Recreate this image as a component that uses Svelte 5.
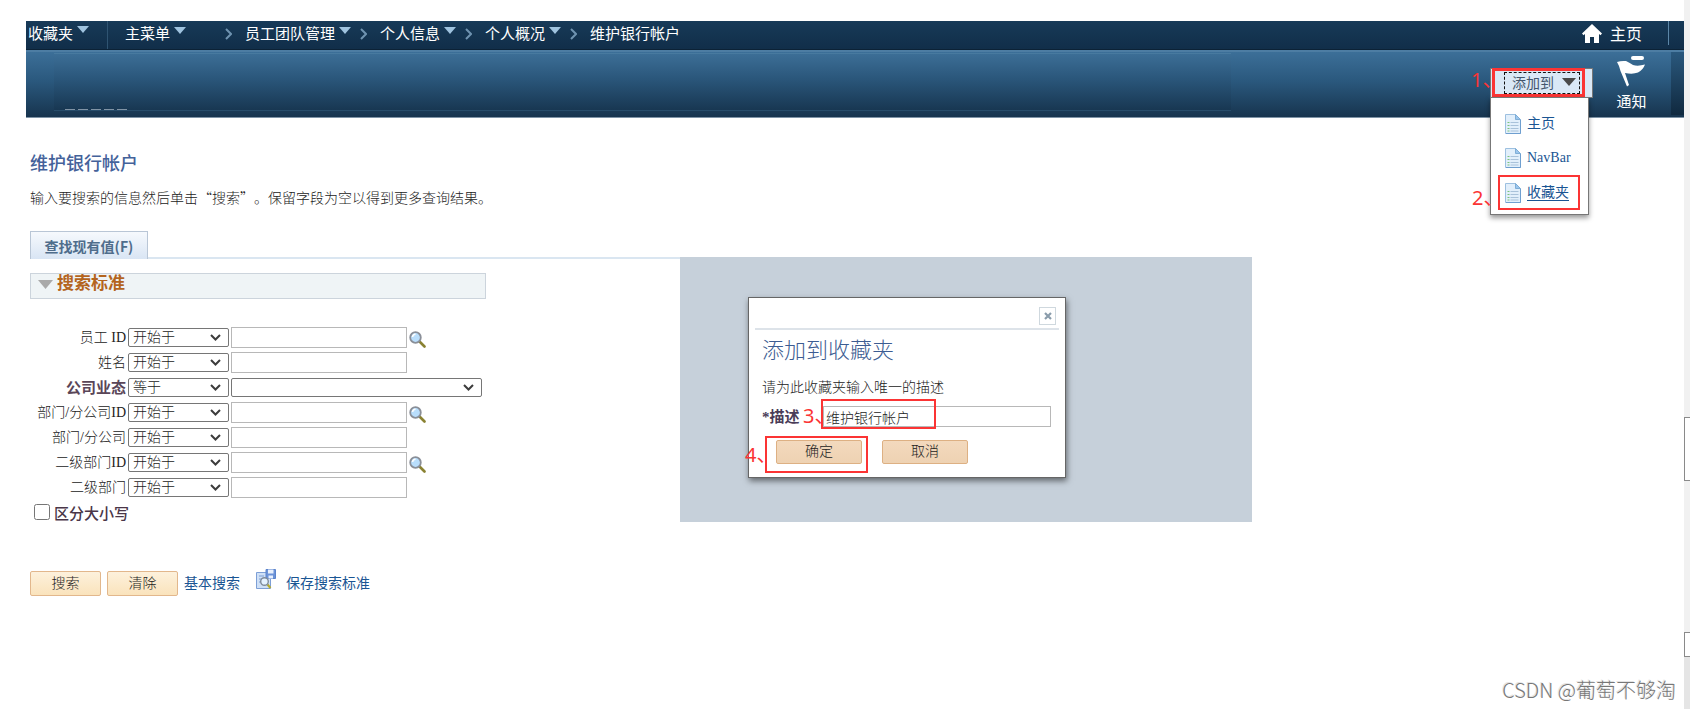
<script>
  const crumbs = [
    { label: '员工团队管理', menu: true },
    { label: '个人信息', menu: true },
    { label: '个人概况', menu: true },
    { label: '维护银行帐户', menu: false }
  ];
  const fields = [
    { id: 'emplid', label: '员工 ID', op: '开始于', lookup: true },
    { id: 'name', label: '姓名', op: '开始于' },
    { id: 'business', label: '公司业态', op: '等于', list: true, strong: true },
    { id: 'deptid', label: '部门/分公司ID', op: '开始于', lookup: true },
    { id: 'dept', label: '部门/分公司', op: '开始于' },
    { id: 'subdeptid', label: '二级部门ID', op: '开始于', lookup: true },
    { id: 'subdept', label: '二级部门', op: '开始于' }
  ];
  const targets = ['主页', 'NavBar', '收藏夹'];
  let description = $state('维护银行帐户');
</script>

{#snippet caret()}
  <svg class="caret" width="12" height="7" viewBox="0 0 12 7"><path d="M0 0h12L6 7z" fill="#9fc3df" /></svg>
{/snippet}

{#snippet arrow()}
  <svg class="arrow" width="11" height="7" viewBox="0 0 11 7"><path d="M1 1l4.500 4.500L10 1" fill="none" stroke="#3c3c3c" stroke-width="2" /></svg>
{/snippet}

<div class="page">
  <div class="main">
    <header>
      <nav>
        <a class="fav" href="#fav">收藏夹{@render caret()}</a>
        <a class="mainmenu" href="#menu">主菜单{@render caret()}</a>
        {#each crumbs as c}
          <svg class="chev" width="7" height="12" viewBox="0 0 7 12"><path d="M1 1l5 5-5 5" fill="none" stroke="#6f93b0" stroke-width="2" /></svg>
          <a class="crumb" href="#crumb">{c.label}{#if c.menu}{@render caret()}{/if}</a>
        {/each}
        <a class="home" href="#home">
          <svg width="20" height="19" viewBox="0 0 20 19"><path d="M10 0L0 9.500l1.500 1.800L3 10V19h5v-6h4v6h5v-9l1.500 1.300L20 9.500z" fill="#fff" /></svg>
          主页
        </a>
      </nav>
      <div class="banner">
        <div class="band"><i></i></div>
        <div class="addto">
          <button class="addbtn" type="button">
            <span>添加到 <svg width="14" height="8" viewBox="0 0 14 8"><path d="M0 0h14L7 8z" fill="#4a4a4a" /></svg></span>
          </button>
          <div class="menu">
            {#each targets as t, i}
              <a href="#target" class:chosen={i === 2}>
                <svg width="16" height="20" viewBox="0 0 16 20">
                  <path d="M.5.5h10l5 5v14H.5z" fill="#e2effb" stroke="#9dc0e0" />
                  <path d="M15.500 6v13.500H1" fill="none" stroke="#6f9fd0" />
                  <path d="M10.500.500v5h5z" fill="#9cc6ee" stroke="#7faed6" />
                  <path d="M5.500 8.500h8M5.500 11.500h8M5.500 14.500h8M5.500 17h8" stroke="#a9c2da" />
                  <path d="M2.500 8.500h2M2.500 11.500h2M2.500 14.500h2M2.500 17h2" stroke="#7cc47c" />
                </svg>
                <span>{t}</span>
              </a>
            {/each}
            <b class="mark two">2、</b>
          </div>
          <b class="mark one">1、</b>
        </div>
        <a class="notice" href="#notice">
          <svg width="29" height="31" viewBox="0 0 29 31">
            <rect x="14" y="0" width="13" height="4" rx="2" fill="#fff" />
            <path d="M0 6Q4 4.500 9 5Q13 7 16 9Q21 10.500 28 8.500Q26 14 21 16.500Q16 18.500 8 17L12 29L10 30.500L3.500 15Q2.500 10 0 6z" fill="#fff" />
          </svg>
          通知
        </a>
        <div class="edge"></div>
      </div>
    </header>

    <div class="content">
      <h1>维护银行帐户</h1>
      <p class="intro">输入要搜索的信息然后单击“搜索”。保留字段为空以得到更多查询结果。</p>
      <div class="columns">
        <form>
          <div class="tabs"><button type="button">查找现有值(F)</button></div>
          <h2><svg width="15" height="9" viewBox="0 0 15 9"><path d="M0 0h15L7.500 9z" fill="#a9a9a9" /></svg>搜索标准</h2>
          <div class="fields">
            {#each fields as f}
              <label class:strong={f.strong} for={f.id}>{f.label}</label>
              <div class="select op">
                <select aria-label={f.label}><option>{f.op}</option></select>
                {@render arrow()}
              </div>
              {#if f.list}
                <div class="select list">
                  <select id={f.id}><option></option></select>
                  {@render arrow()}
                </div>
              {:else}
                <div class="value">
                  <input id={f.id} type="text" />
                  {#if f.lookup}
                    <button type="button" aria-label="查找">
                      <svg width="17" height="17" viewBox="0 0 17 17">
                        <path d="M10.500 10.500l5 5" stroke="#8a8232" stroke-width="2.600" stroke-linecap="round" />
                        <circle cx="6.500" cy="6.500" r="5.300" fill="#b9defc" stroke="#8a8f98" stroke-width="1.800" />
                        <path d="M3.500 6a3.200 3.200 0 0 1 3-2.800" stroke="#fff" stroke-width="1.600" fill="none" />
                      </svg>
                    </button>
                  {/if}
                </div>
              {/if}
            {/each}
          </div>
          <label class="case"><input type="checkbox" />区分大小写</label>
          <div class="actions">
            <button type="button">搜索</button>
            <button type="button">清除</button>
            <a href="#basic">基本搜索</a>
            <svg width="20" height="21" viewBox="0 0 20 21">
              <path d="M.5 3.500h14v16H.5z" fill="#cfe0f6" stroke="#7d9fd6" />
              <path d="M3 7h5M3 10h3M3 13h2" stroke="#7d9fd6" />
              <path d="M10 .5h9.500v9H10z" fill="#6c93d8" stroke="#5c84cc" />
              <path d="M12 .5h5.500v4H12zM12.500 6.500h4.500v3h-4.500z" fill="#e8f0fc" />
              <path d="M11.500 15.500l3 3.500" stroke="#b4ab2e" stroke-width="2.200" />
              <circle cx="8.500" cy="12.500" r="3.800" fill="#e4f2ff" stroke="#7f8b9b" stroke-width="1.400" />
            </svg>
            <a href="#save">保存搜索标准</a>
          </div>
        </form>

        <div class="shade">
          <div class="dialog" role="dialog" aria-labelledby="dlg-title">
            <div class="bar">
              <button type="button" aria-label="关闭">
                <svg width="8" height="8" viewBox="0 0 8 8"><path d="M1 1l6 6M7 1L1 7" stroke="#8a9cab" stroke-width="2.200" /></svg>
              </button>
            </div>
            <h3 id="dlg-title">添加到收藏夹</h3>
            <p>请为此收藏夹输入唯一的描述</p>
            <div class="desc">
              <label for="desc">*描述</label>
              <div class="descbox">
                <input id="desc" type="text" bind:value={description} />
                <i class="frame"></i>
                <b class="mark three">3、</b>
              </div>
            </div>
            <div class="buttons">
              <div class="ok">
                <button type="button">确定</button>
                <i class="frame"></i>
                <b class="mark four">4、</b>
              </div>
              <button type="button">取消</button>
            </div>
          </div>
        </div>
      </div>
    </div>
  </div>

  <aside>
    <div class="track"></div>
    <div class="box tall"></div>
    <div class="track mid"></div>
    <div class="box"></div>
    <div class="foot"></div>
  </aside>
  <div class="watermark">CSDN @葡萄不够淘</div>
</div>

<style>
  :global(body) { margin: 0; background: #fff; }
  .page, button, input, select {
    font-family: 'Liberation Serif', 'Noto Sans CJK SC', sans-serif;
    font-size: 14px;
    font-weight: 300;
    color: #222;
  }
  .page, .page * { box-sizing: border-box; }
  .page { position: relative; display: flex; min-height: 100vh; line-height: 20px; overflow: hidden; }
  .main { flex: 1; padding-top: 21px; }
  svg { display: block; flex: none; }
  a { text-decoration: none; color: #1a5593; font-weight: 400; }
  h1, h2, h3, p { margin: 0; }
  button { padding: 0; }

  header { margin-left: 26px; font-family: 'Noto Sans CJK SC', sans-serif; }
  nav {
    display: flex; align-items: flex-start; height: 29px; font-size: 15px;
    background: linear-gradient(#173a58, #112e49); border-bottom: 1px solid #0c2236;
  }
  nav a { display: flex; align-items: center; color: #fff; height: 24px; white-space: nowrap; }
  .caret { margin: 0 0 6px 4px; }
  .fav { width: 82px; height: 28px; padding: 0 0 5px 2px; border-right: 1px solid #2f5472; }
  .mainmenu { margin: 0 39px 0 17px; }
  .chev { margin: 7px 13px 0 0; }
  .crumb { margin-right: 9px; }
  .home {
    margin-left: auto; margin-right: 15px; padding-right: 26px; gap: 8px;
    font-size: 16px; border-right: 1px solid #5c87a8;
  }
  .banner {
    display: flex; height: 68px; border-top: 2px solid #4d7da3; border-bottom: 1px solid #7e93a6;
    background: linear-gradient(#3c6f98, #2a587d 45%, #17344e); position: relative;
  }
  .band {
    width: 71%; margin: 1px auto 6px 28px; border-top: 1px solid #487a9f; border-bottom: 1px solid #274c6a;
    background: linear-gradient(#3c6e96, #2a567a 45%, #183752);
    display: flex; align-items: flex-end;
  }
  .band i {
    width: 62px; height: 1px; margin-left: 11px;
    background: repeating-linear-gradient(90deg, #8093a5 0 10px, transparent 10px 13px);
  }
  .addto { position: relative; width: 103px; height: 30px; margin: 16px 23px 0 0; }
  .addbtn {
    display: flex; width: 103px; height: 30px; padding: 0; background: #dae8f6;
    border: 1px solid #777; border-radius: 0; align-items: center;
    font-family: 'Noto Sans CJK SC', sans-serif; font-weight: 400; color: #44566c;
  }
  .addbtn span {
    display: flex; align-items: center; justify-content: space-between; height: 20px;
    margin-left: 14px; padding: 0 3px 2px 7px; width: 74px; outline: 1px dashed #111; position: relative;
    line-height: 18px;
  }
  .addbtn span::after {
    content: ''; position: absolute; inset: -5px -6px -4px -13px; border: 3px solid #fb3434;
  }
  .menu {
    position: absolute; z-index: 2; top: 29px; left: 0; width: 99px; padding: 9px 8px 4px 7px; background: #fff;
    border: 1px solid #777; box-shadow: 0 3px 5px rgba(0, 0, 0, .4);
    font-family: 'Liberation Serif', 'Noto Sans CJK SC', sans-serif;
  }
  .menu a { display: flex; align-items: center; gap: 6px; height: 34px; padding: 0 5px; border: 2px solid transparent; }
  .menu a.chosen { height: 35px; border-color: #fb3434; }
  .chosen span { text-decoration: underline; text-underline-offset: 3px; }
  .mark {
    position: absolute; z-index: 3; font: 20px/24px 'Noto Sans', 'Noto Sans CJK SC', sans-serif;
    color: #fb3434; white-space: nowrap;
  }
  .one { left: -19px; top: 0; }
  .two { left: -19px; bottom: 4px; }
  .notice { display: flex; flex-direction: column; align-items: center; gap: 4px; padding-top: 4px; width: 31px; margin-right: 24px; font-size: 15px; color: #fff; white-space: nowrap; }
  .edge { width: 13px; margin-bottom: 2px; background: linear-gradient(#2a587d, #10293f); }

  .content { padding: 33px 0 0 30px; }
  h1 { font-size: 18px; line-height: 26px; font-weight: 500; color: #44629a; }
  .intro {
    margin: 10px 0 24px; font-family: 'Noto Sans CJK SC', sans-serif; line-height: 20px;
    white-space: nowrap; text-spacing-trim: space-all;
  }
  .columns { display: grid; grid-template-columns: 650fr 572fr 432fr; align-items: start; }
  .tabs { height: 28px; border-bottom: 2px solid #dae6f1; }
  .tabs button {
    height: 28px; width: 118px; font: 700 14px 'Noto Sans CJK SC', sans-serif; color: #4f6d8c;
    border: 1px solid #b9c6d6; border-bottom: 0; background: linear-gradient(#f6f9fd, #d9e5f4);
  }
  h2 {
    display: flex; align-items: center; gap: 4px; width: 456px; height: 26px; margin-top: 14px; padding: 0 0 4px 7px;
    border: 1px solid #ccd4dc; background: #eff4f6; font-size: 17px; font-weight: 700; color: #b4651e;
  }
  .fields {
    display: grid; grid-template-columns: 96px 101px auto; column-gap: 2px; grid-auto-rows: 25px;
    align-items: center; margin-top: 26px; justify-content: start;
  }
  .fields label { justify-self: end; white-space: nowrap; }
  .fields .strong { font-size: 15px; font-weight: 700; color: #5a4658; }
  .select { display: grid; align-items: center; }
  .select > :global(*) { grid-area: 1 / 1; }
  .select select {
    appearance: none; width: 100%; height: 19px; padding: 0 4px; border: 1px solid #767676;
    border-radius: 2px; background: #fff; line-height: 17px;
  }
  .arrow { justify-self: end; margin-right: 8px; pointer-events: none; }
  .list { width: 251px; }
  .value { display: flex; align-items: center; gap: 2px; }
  .value input { width: 176px; height: 21px; border: 1px solid #b8b8b8; padding: 0 3px; }
  .value button { border: 0; background: none; margin-top: 4px; }
  .case { display: flex; align-items: center; gap: 4px; height: 28px; font-size: 15px; font-weight: 500; color: #4a3648; }
  .case input { width: 16px; height: 16px; margin: 0 0 4px 4px; }
  .actions { display: flex; align-items: center; height: 25px; margin-top: 43px; }
  .actions button, .buttons button {
    width: 71px; height: 25px; border: 1px solid #e2b78c; border-radius: 2px;
    background: linear-gradient(#fdf1dc, #fae3bc); color: #222; line-height: 20px;
  }
  .actions button { margin-right: 6px; }
  .actions svg { margin: 0 10px 8px 16px; }

  .shade { background: #c6d0da; height: 265px; margin-top: 26px; padding: 40px 0 0 68px; }
  .dialog {
    width: 318px; height: 181px; padding: 0 6px; background: #fff; border: 1px solid #666;
    box-shadow: 1px 3px 6px rgba(0, 0, 0, .5);
  }
  .bar { display: flex; justify-content: flex-end; height: 32px; padding: 9px 3px 0 0; border-bottom: 2px solid #dde3e9; }
  .bar button { display: grid; place-items: center; width: 17px; height: 18px; background: #fff; border: 1px solid #cfd8de; }
  .dialog h3 { margin: 6px 0 0 7px; font-size: 22px; line-height: 30px; font-weight: 300; color: #3c5c92; }
  .dialog p { margin: 12px 0 0 7px; line-height: 20px; }
  .desc { display: flex; align-items: center; justify-content: space-between; margin: 8px 8px 0 7px; }
  .desc label { font-weight: 700; font-size: 15px; color: #4a3c58; }
  .descbox { position: relative; width: 228px; }
  .descbox input { display: block; width: 100%; height: 21px; border: 1px solid #b8b8b8; padding: 0 2px; }
  .frame { position: absolute; border: 2px solid #fb3434; pointer-events: none; }
  .descbox .frame { inset: -7px auto -2px -2px; width: 115px; }
  .three { left: -20px; top: -2px; }
  .buttons { display: flex; gap: 20px; margin: 13px 0 0 21px; }
  .buttons button { display: block; width: 86px; background: linear-gradient(#f3d9bd, #eed2b2); border-color: #ddb083; height: 24px; }
  .ok { position: relative; }
  .ok .frame { inset: -4px -6px -9px -11px; }
  .four { left: -31px; top: 3px; }

  aside { display: flex; flex-direction: column; width: 6px; background: #f1f1f1; }
  .track { height: 417px; }
  .mid { height: 151px; }
  .box { height: 25px; background: #fff; border: 1px solid #8a8a8a; border-right: 0; }
  .tall { height: 64px; }
  .foot { flex: 1; background: #e5e5e5; }
  .watermark {
    position: absolute; right: 14px; bottom: 4px; font: 300 20px/30px 'Noto Sans CJK SC', sans-serif;
    color: #777; text-shadow: -1px -1px 0 #e4e4e4; white-space: nowrap;
  }
</style>
